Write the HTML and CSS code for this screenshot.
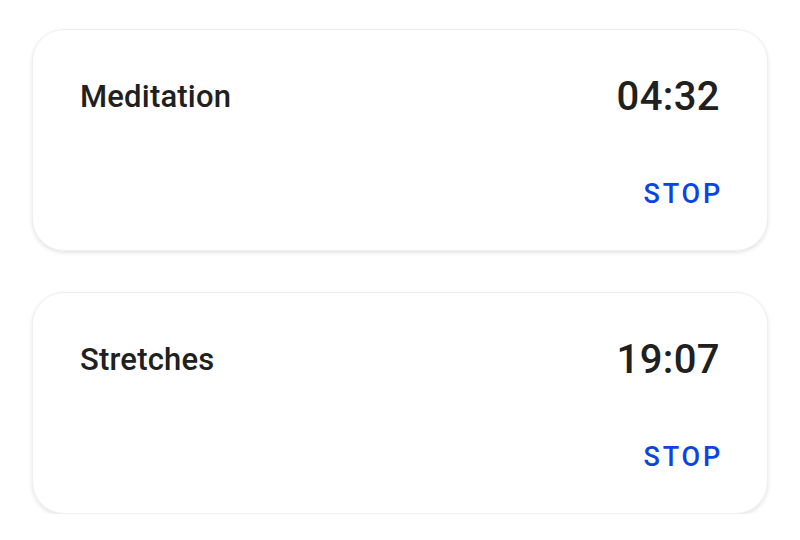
FILE: index.html
```html
<!DOCTYPE html>
<html>
<head>
<meta charset="utf-8">
<link rel="stylesheet" href="styles.css">
</head>
<body>
<div class="list">
  <div class="card">
    <div class="row">
      <span class="title">Meditation</span>
      <span class="time">04:32</span>
    </div>
    <div class="actions"><span class="stop">STOP</span></div>
  </div>
  <div class="card">
    <div class="row">
      <span class="title">Stretches</span>
      <span class="time">19:07</span>
    </div>
    <div class="actions"><span class="stop">STOP</span></div>
  </div>
</div>
</body>
</html>
```
FILE: styles.css
```css
html, body {
  margin: 0;
  padding: 0;
  background: #ffffff;
}
body {
  font-family: Roboto, "Noto Sans", sans-serif;
  color: #202020;
}
.list {
  display: flex;
  flex-direction: column;
  gap: 41px;
  padding: 29px 32px 0 32px;
}
.card {
  height: 222px;
  box-sizing: border-box;
  border: 1px solid #efefef;
  border-radius: 32px;
  box-shadow: 0 2px 4px rgba(0,0,0,0.10);
  background: #fff;
  padding: 0 47px;
  display: flex;
  flex-direction: column;
}
.row {
  display: flex;
  justify-content: space-between;
  align-items: center;
  height: 110px;
  box-sizing: border-box;
  padding-top: 47px;
  padding-bottom: 23px;
}
.title {
  font-size: 31px;
  font-weight: 500;
  letter-spacing: 0.2px;
  line-height: 40px;
}
.time {
  font-size: 40px;
  font-weight: 500;
  letter-spacing: 0.4px;
  line-height: 40px;
}
.actions {
  display: flex;
  justify-content: flex-end;
  padding-top: 39px;
}
.stop {
  font-size: 27px;
  font-weight: 500;
  letter-spacing: 2.8px;
  color: #0a45e3;
  line-height: 30px;
  margin-right: -3px;
}
```
